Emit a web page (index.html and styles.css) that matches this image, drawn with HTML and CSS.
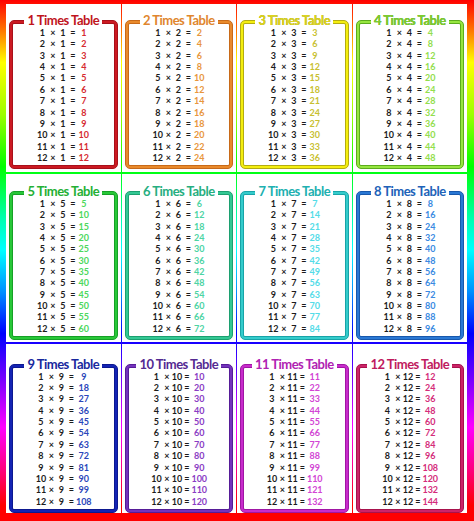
FILE: index.html
```html
<!DOCTYPE html>
<html lang="en">
<head>
<meta charset="utf-8">
<title>Times Tables 1-12</title>
<link rel="stylesheet" href="styles.css">
</head>
<body>
<div class="frame">
  <div class="chart">
    <div class="row r1">
      <div class="cell"><div class="card c1"><div class="title">1 Times Table</div><div class="eq">
        <span>1</span><span>×</span><span>1</span><span>=</span><span>1</span>
        <span>2</span><span>×</span><span>1</span><span>=</span><span>2</span>
        <span>3</span><span>×</span><span>1</span><span>=</span><span>3</span>
        <span>4</span><span>×</span><span>1</span><span>=</span><span>4</span>
        <span>5</span><span>×</span><span>1</span><span>=</span><span>5</span>
        <span>6</span><span>×</span><span>1</span><span>=</span><span>6</span>
        <span>7</span><span>×</span><span>1</span><span>=</span><span>7</span>
        <span>8</span><span>×</span><span>1</span><span>=</span><span>8</span>
        <span>9</span><span>×</span><span>1</span><span>=</span><span>9</span>
        <span>10</span><span>×</span><span>1</span><span>=</span><span>10</span>
        <span>11</span><span>×</span><span>1</span><span>=</span><span>11</span>
        <span>12</span><span>×</span><span>1</span><span>=</span><span>12</span>
      </div></div></div>
      <div class="cell"><div class="card c2"><div class="title">2 Times Table</div><div class="eq">
        <span>1</span><span>×</span><span>2</span><span>=</span><span>2</span>
        <span>2</span><span>×</span><span>2</span><span>=</span><span>4</span>
        <span>3</span><span>×</span><span>2</span><span>=</span><span>6</span>
        <span>4</span><span>×</span><span>2</span><span>=</span><span>8</span>
        <span>5</span><span>×</span><span>2</span><span>=</span><span>10</span>
        <span>6</span><span>×</span><span>2</span><span>=</span><span>12</span>
        <span>7</span><span>×</span><span>2</span><span>=</span><span>14</span>
        <span>8</span><span>×</span><span>2</span><span>=</span><span>16</span>
        <span>9</span><span>×</span><span>2</span><span>=</span><span>18</span>
        <span>10</span><span>×</span><span>2</span><span>=</span><span>20</span>
        <span>11</span><span>×</span><span>2</span><span>=</span><span>22</span>
        <span>12</span><span>×</span><span>2</span><span>=</span><span>24</span>
      </div></div></div>
      <div class="cell"><div class="card c3"><div class="title">3 Times Table</div><div class="eq">
        <span>1</span><span>×</span><span>3</span><span>=</span><span>3</span>
        <span>2</span><span>×</span><span>3</span><span>=</span><span>6</span>
        <span>3</span><span>×</span><span>3</span><span>=</span><span>9</span>
        <span>4</span><span>×</span><span>3</span><span>=</span><span>12</span>
        <span>5</span><span>×</span><span>3</span><span>=</span><span>15</span>
        <span>6</span><span>×</span><span>3</span><span>=</span><span>18</span>
        <span>7</span><span>×</span><span>3</span><span>=</span><span>21</span>
        <span>8</span><span>×</span><span>3</span><span>=</span><span>24</span>
        <span>9</span><span>×</span><span>3</span><span>=</span><span>27</span>
        <span>10</span><span>×</span><span>3</span><span>=</span><span>30</span>
        <span>11</span><span>×</span><span>3</span><span>=</span><span>33</span>
        <span>12</span><span>×</span><span>3</span><span>=</span><span>36</span>
      </div></div></div>
      <div class="cell"><div class="card c4"><div class="title">4 Times Table</div><div class="eq">
        <span>1</span><span>×</span><span>4</span><span>=</span><span>4</span>
        <span>2</span><span>×</span><span>4</span><span>=</span><span>8</span>
        <span>3</span><span>×</span><span>4</span><span>=</span><span>12</span>
        <span>4</span><span>×</span><span>4</span><span>=</span><span>16</span>
        <span>5</span><span>×</span><span>4</span><span>=</span><span>20</span>
        <span>6</span><span>×</span><span>4</span><span>=</span><span>24</span>
        <span>7</span><span>×</span><span>4</span><span>=</span><span>28</span>
        <span>8</span><span>×</span><span>4</span><span>=</span><span>32</span>
        <span>9</span><span>×</span><span>4</span><span>=</span><span>36</span>
        <span>10</span><span>×</span><span>4</span><span>=</span><span>40</span>
        <span>11</span><span>×</span><span>4</span><span>=</span><span>44</span>
        <span>12</span><span>×</span><span>4</span><span>=</span><span>48</span>
      </div></div></div>
    </div>
    <div class="row r2">
      <div class="cell"><div class="card c5"><div class="title">5 Times Table</div><div class="eq">
        <span>1</span><span>×</span><span>5</span><span>=</span><span>5</span>
        <span>2</span><span>×</span><span>5</span><span>=</span><span>10</span>
        <span>3</span><span>×</span><span>5</span><span>=</span><span>15</span>
        <span>4</span><span>×</span><span>5</span><span>=</span><span>20</span>
        <span>5</span><span>×</span><span>5</span><span>=</span><span>25</span>
        <span>6</span><span>×</span><span>5</span><span>=</span><span>30</span>
        <span>7</span><span>×</span><span>5</span><span>=</span><span>35</span>
        <span>8</span><span>×</span><span>5</span><span>=</span><span>40</span>
        <span>9</span><span>×</span><span>5</span><span>=</span><span>45</span>
        <span>10</span><span>×</span><span>5</span><span>=</span><span>50</span>
        <span>11</span><span>×</span><span>5</span><span>=</span><span>55</span>
        <span>12</span><span>×</span><span>5</span><span>=</span><span>60</span>
      </div></div></div>
      <div class="cell"><div class="card c6"><div class="title">6 Times Table</div><div class="eq">
        <span>1</span><span>×</span><span>6</span><span>=</span><span>6</span>
        <span>2</span><span>×</span><span>6</span><span>=</span><span>12</span>
        <span>3</span><span>×</span><span>6</span><span>=</span><span>18</span>
        <span>4</span><span>×</span><span>6</span><span>=</span><span>24</span>
        <span>5</span><span>×</span><span>6</span><span>=</span><span>30</span>
        <span>6</span><span>×</span><span>6</span><span>=</span><span>36</span>
        <span>7</span><span>×</span><span>6</span><span>=</span><span>42</span>
        <span>8</span><span>×</span><span>6</span><span>=</span><span>48</span>
        <span>9</span><span>×</span><span>6</span><span>=</span><span>54</span>
        <span>10</span><span>×</span><span>6</span><span>=</span><span>60</span>
        <span>11</span><span>×</span><span>6</span><span>=</span><span>66</span>
        <span>12</span><span>×</span><span>6</span><span>=</span><span>72</span>
      </div></div></div>
      <div class="cell"><div class="card c7"><div class="title">7 Times Table</div><div class="eq">
        <span>1</span><span>×</span><span>7</span><span>=</span><span>7</span>
        <span>2</span><span>×</span><span>7</span><span>=</span><span>14</span>
        <span>3</span><span>×</span><span>7</span><span>=</span><span>21</span>
        <span>4</span><span>×</span><span>7</span><span>=</span><span>28</span>
        <span>5</span><span>×</span><span>7</span><span>=</span><span>35</span>
        <span>6</span><span>×</span><span>7</span><span>=</span><span>42</span>
        <span>7</span><span>×</span><span>7</span><span>=</span><span>49</span>
        <span>8</span><span>×</span><span>7</span><span>=</span><span>56</span>
        <span>9</span><span>×</span><span>7</span><span>=</span><span>63</span>
        <span>10</span><span>×</span><span>7</span><span>=</span><span>70</span>
        <span>11</span><span>×</span><span>7</span><span>=</span><span>77</span>
        <span>12</span><span>×</span><span>7</span><span>=</span><span>84</span>
      </div></div></div>
      <div class="cell"><div class="card c8"><div class="title">8 Times Table</div><div class="eq">
        <span>1</span><span>×</span><span>8</span><span>=</span><span>8</span>
        <span>2</span><span>×</span><span>8</span><span>=</span><span>16</span>
        <span>3</span><span>×</span><span>8</span><span>=</span><span>24</span>
        <span>4</span><span>×</span><span>8</span><span>=</span><span>32</span>
        <span>5</span><span>×</span><span>8</span><span>=</span><span>40</span>
        <span>6</span><span>×</span><span>8</span><span>=</span><span>48</span>
        <span>7</span><span>×</span><span>8</span><span>=</span><span>56</span>
        <span>8</span><span>×</span><span>8</span><span>=</span><span>64</span>
        <span>9</span><span>×</span><span>8</span><span>=</span><span>72</span>
        <span>10</span><span>×</span><span>8</span><span>=</span><span>80</span>
        <span>11</span><span>×</span><span>8</span><span>=</span><span>88</span>
        <span>12</span><span>×</span><span>8</span><span>=</span><span>96</span>
      </div></div></div>
    </div>
    <div class="row r3">
      <div class="cell"><div class="card c9"><div class="title">9 Times Table</div><div class="eq">
        <span>1</span><span>×</span><span>9</span><span>=</span><span>9</span>
        <span>2</span><span>×</span><span>9</span><span>=</span><span>18</span>
        <span>3</span><span>×</span><span>9</span><span>=</span><span>27</span>
        <span>4</span><span>×</span><span>9</span><span>=</span><span>36</span>
        <span>5</span><span>×</span><span>9</span><span>=</span><span>45</span>
        <span>6</span><span>×</span><span>9</span><span>=</span><span>54</span>
        <span>7</span><span>×</span><span>9</span><span>=</span><span>63</span>
        <span>8</span><span>×</span><span>9</span><span>=</span><span>72</span>
        <span>9</span><span>×</span><span>9</span><span>=</span><span>81</span>
        <span>10</span><span>×</span><span>9</span><span>=</span><span>90</span>
        <span>11</span><span>×</span><span>9</span><span>=</span><span>99</span>
        <span>12</span><span>×</span><span>9</span><span>=</span><span>108</span>
      </div></div></div>
      <div class="cell"><div class="card c10"><div class="title">10 Times Table</div><div class="eq">
        <span>1</span><span>×</span><span>10</span><span>=</span><span>10</span>
        <span>2</span><span>×</span><span>10</span><span>=</span><span>20</span>
        <span>3</span><span>×</span><span>10</span><span>=</span><span>30</span>
        <span>4</span><span>×</span><span>10</span><span>=</span><span>40</span>
        <span>5</span><span>×</span><span>10</span><span>=</span><span>50</span>
        <span>6</span><span>×</span><span>10</span><span>=</span><span>60</span>
        <span>7</span><span>×</span><span>10</span><span>=</span><span>70</span>
        <span>8</span><span>×</span><span>10</span><span>=</span><span>80</span>
        <span>9</span><span>×</span><span>10</span><span>=</span><span>90</span>
        <span>10</span><span>×</span><span>10</span><span>=</span><span>100</span>
        <span>11</span><span>×</span><span>10</span><span>=</span><span>110</span>
        <span>12</span><span>×</span><span>10</span><span>=</span><span>120</span>
      </div></div></div>
      <div class="cell"><div class="card c11"><div class="title">11 Times Table</div><div class="eq">
        <span>1</span><span>×</span><span>11</span><span>=</span><span>11</span>
        <span>2</span><span>×</span><span>11</span><span>=</span><span>22</span>
        <span>3</span><span>×</span><span>11</span><span>=</span><span>33</span>
        <span>4</span><span>×</span><span>11</span><span>=</span><span>44</span>
        <span>5</span><span>×</span><span>11</span><span>=</span><span>55</span>
        <span>6</span><span>×</span><span>11</span><span>=</span><span>66</span>
        <span>7</span><span>×</span><span>11</span><span>=</span><span>77</span>
        <span>8</span><span>×</span><span>11</span><span>=</span><span>88</span>
        <span>9</span><span>×</span><span>11</span><span>=</span><span>99</span>
        <span>10</span><span>×</span><span>11</span><span>=</span><span>110</span>
        <span>11</span><span>×</span><span>11</span><span>=</span><span>121</span>
        <span>12</span><span>×</span><span>11</span><span>=</span><span>132</span>
      </div></div></div>
      <div class="cell"><div class="card c12"><div class="title">12 Times Table</div><div class="eq">
        <span>1</span><span>×</span><span>12</span><span>=</span><span>12</span>
        <span>2</span><span>×</span><span>12</span><span>=</span><span>24</span>
        <span>3</span><span>×</span><span>12</span><span>=</span><span>36</span>
        <span>4</span><span>×</span><span>12</span><span>=</span><span>48</span>
        <span>5</span><span>×</span><span>12</span><span>=</span><span>60</span>
        <span>6</span><span>×</span><span>12</span><span>=</span><span>72</span>
        <span>7</span><span>×</span><span>12</span><span>=</span><span>84</span>
        <span>8</span><span>×</span><span>12</span><span>=</span><span>96</span>
        <span>9</span><span>×</span><span>12</span><span>=</span><span>108</span>
        <span>10</span><span>×</span><span>12</span><span>=</span><span>120</span>
        <span>11</span><span>×</span><span>12</span><span>=</span><span>132</span>
        <span>12</span><span>×</span><span>12</span><span>=</span><span>144</span>
      </div></div></div>
    </div>
  </div>
</div>
</body>
</html>
```
FILE: styles.css
```css
* { box-sizing: border-box; }
html, body { margin: 0; padding: 0; }
body { font-family: Lato, "Liberation Sans", sans-serif; background: #fff; }

.frame {
  width: 474px;
  height: 521px;
  padding: 4px 7px 8px 6px;
  background: linear-gradient(to bottom,
    #ff0000 0%, #ff7a00 6%, #ffff00 12%, #9cff00 22%, #00ff00 32%,
    #00ffb0 42%, #00ffff 48%, #0090ff 56%, #0000ff 64%, #7a00ff 73%,
    #ff00ff 82%, #ff0070 91%, #ff0000 97%);
}

.chart {
  height: 100%;
  display: flex;
  flex-direction: column;
  gap: 2px;
}

.row {
  flex: 1;
  display: grid;
  grid-template-columns: repeat(4, 1fr);
  gap: 1px;
}

.cell {
  background: #fff;
  padding: 16px 3px 0 3px;
}
.r2 .cell { padding-top: 17px; }
.r3 .cell { padding-top: 20px; }

.card {
  border: 1px solid var(--d);
  border-radius: 5px;
  box-shadow: inset 0 0 0 2px var(--c), inset 0 0 0 3px var(--d);
  padding: 0 3px 5px;
}

.title {
  width: max-content;
  margin: -8px auto 0;
  padding: 0 3px;
  background: #fff;
  font-family: Lato, "Liberation Sans", sans-serif;
  font-weight: 700;
  font-size: 13px;
  line-height: 14px;
  letter-spacing: -0.5px;
  color: var(--t);
  text-shadow: 0 0 0.6px var(--ts, transparent);
}

.eq {
  display: grid;
  grid-template-columns: 12px 9px minmax(11px, auto) 9px minmax(13px, auto);
  justify-content: center;
  justify-items: center;
  font-family: Lato, "Liberation Sans", sans-serif;
  font-weight: 700;
  font-size: 9px;
  line-height: 11.36px;
  color: #1c1c1c;
}
.eq span:nth-child(5n) { color: var(--r); }

.c1  { --c: #cc1a22; --d: #a8101a; --t: #c0141c; --r: #d62a30; }
.c2  { --c: #e98a2c; --d: #c86a18; --t: #e0862e; --r: #e8963c; }
.c3  { --c: #f4ee10; --d: #b4ac10; --t: #dcd420; --ts: #8a8400; --r: #c8c030; }
.c4  { --c: #96e640; --d: #5cac1c; --t: #7ccc30; --ts: #4a9010; --r: #92de4c; }
.c5  { --c: #28c838; --d: #16a026; --t: #24b034; --r: #4cd85c; }
.c6  { --c: #34c894; --d: #1ca070; --t: #26ae80; --r: #4cd4a4; }
.c7  { --c: #34cccc; --d: #18a4a8; --t: #20b0b0; --r: #54dce8; }
.c8  { --c: #2a78d4; --d: #1858ac; --t: #2062b8; --r: #3a8ae2; }
.c9  { --c: #1424b4; --d: #0c1890; --t: #18289e; --r: #2a46ba; }
.c10 { --c: #7434bc; --d: #561c98; --t: #542a92; --r: #8a3cc4; }
.c11 { --c: #c82ccc; --d: #a016a4; --t: #b022b2; --r: #d244d4; }
.c12 { --c: #cc2468; --d: #a8124c; --t: #c01a5e; --r: #d42c7a; }
```
